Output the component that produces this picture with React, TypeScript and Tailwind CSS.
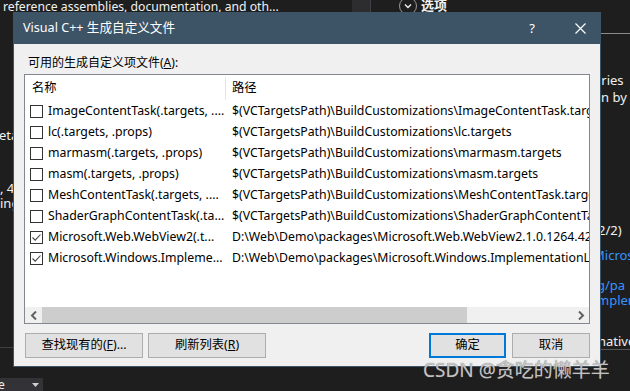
import React from "react";

const FONT = { fontFamily: '"Noto Sans", "Noto Sans CJK SC", sans-serif' };

const rows = [
  { name: "ImageContentTask(.targets, ....", path: "$(VCTargetsPath)\\BuildCustomizations\\ImageContentTask.targets", checked: false },
  { name: "lc(.targets, .props)", path: "$(VCTargetsPath)\\BuildCustomizations\\lc.targets", checked: false },
  { name: "marmasm(.targets, .props)", path: "$(VCTargetsPath)\\BuildCustomizations\\marmasm.targets", checked: false },
  { name: "masm(.targets, .props)", path: "$(VCTargetsPath)\\BuildCustomizations\\masm.targets", checked: false },
  { name: "MeshContentTask(.targets, ....", path: "$(VCTargetsPath)\\BuildCustomizations\\MeshContentTask.targets", checked: false },
  { name: "ShaderGraphContentTask(.ta...", path: "$(VCTargetsPath)\\BuildCustomizations\\ShaderGraphContentTask.targets", checked: false },
  { name: "Microsoft.Web.WebView2(.t...", path: "D:\\Web\\Demo\\packages\\Microsoft.Web.WebView2.1.0.1264.42\\build", checked: true },
  { name: "Microsoft.Windows.Impleme...", path: "D:\\Web\\Demo\\packages\\Microsoft.Windows.ImplementationLibrary", checked: true },
];

function Check({ checked }: { checked: boolean }) {
  return (
    <span className="flex h-[13px] w-[13px] shrink-0 items-center justify-center border border-[#333333] bg-white">
      {checked && (
        <svg width="11" height="11" viewBox="0 0 11 11">
          <path d="M1.5 5.5 L4.2 8.2 L9.5 2.5" fill="none" stroke="#444" strokeWidth="1.1" />
        </svg>
      )}
    </span>
  );
}

function Btn({ children, primary, w }: { children: React.ReactNode; primary?: boolean; w: string }) {
  return (
    <button
      className={`flex h-[25px] items-center justify-center bg-[#e1e1e1] text-[12.3px] text-black ${w} ${
        primary ? "border-2 border-[#0078d7]" : "border border-[#adadad]"
      }`}
    >
      {children}
    </button>
  );
}

export default function App() {
  return (
    <div className="relative h-[391px] w-[630px] overflow-hidden bg-[#1e1e1e] text-[#f1f1f1]" style={FONT}>
      {/* background IDE bits */}
      <div className="absolute left-[3px] top-[-2px] text-[12.2px] leading-[18px]">
        reference assemblies, documentation, and oth...
      </div>
      <div className="absolute left-[352px] top-0 h-[14px] w-[18px] bg-[#2d2d30]" />
      <div className="absolute left-[370px] top-0 h-[14px] w-px bg-[#3f3f46]" />
      <div className="absolute left-[399px] top-[-4px] flex items-center gap-[4px]">
        <span className="flex h-[18px] w-[18px] items-center justify-center rounded-full border border-[#999]">
          <svg width="10" height="10" viewBox="0 0 10 10">
            <path d="M2 3.5 L5 6.5 L8 3.5" fill="none" stroke="#f1f1f1" strokeWidth="1.4" />
          </svg>
        </span>
        <span className="text-[13px] font-bold">选项</span>
      </div>
      <div className="absolute left-[600px] top-[33px] h-px w-[30px] bg-[#8a8a8a]" />
      <div className="absolute left-[594px] top-[71px] text-[13px] leading-[18px]">aries (</div>
      <div className="absolute left-[601px] top-[88px] text-[13px] leading-[18px]">n by</div>
      <div className="absolute left-[598px] top-[221px] text-[13px] leading-[18px]">2/2)</div>
      <div className="absolute left-[593px] top-[246px] text-[13px] leading-[18px] text-[#3794ff]">Micros</div>
      <div className="absolute left-[597px] top-[276px] text-[13px] leading-[18px] text-[#3794ff]">g/pa</div>
      <div className="absolute left-[597px] top-[291px] text-[13px] leading-[18px] text-[#3794ff]">mpler</div>
      <div className="absolute left-[598px] top-[332px] text-[13px] leading-[18px]">native</div>
      <div className="absolute left-[600px] top-[349px] h-px w-[30px] bg-[#555]" />
      <div className="absolute left-[-1px] top-[126px] text-[13px] leading-[18px]">eta</div>
      <div className="absolute left-0 top-[179px] text-[13px] leading-[18px]">, 4</div>
      <div className="absolute left-0 top-[194px] text-[13px] leading-[18px]">ing</div>
      <div className="absolute left-0 top-[347px] h-px w-[14px] bg-[#3f3f46]" />
      <div className="absolute left-0 top-[378px] flex h-[14px] w-[43px] items-center justify-between bg-[#333337] pr-[4px] text-[12px]">
        <span className="-ml-[2px]">e</span>
        <svg width="7" height="4" viewBox="0 0 7 4">
          <path d="M0 0 H7 L3.5 4 Z" fill="#d0d0d0" />
        </svg>
      </div>

      {/* dialog */}
      <div className="absolute left-[13px] top-[12px] flex h-[355px] w-[588px] flex-col border border-[#3d5366] bg-[#f0f0f0]">
        <div className="flex h-[31px] shrink-0 items-center bg-[#3d5366] pl-[9px] pr-[14px] text-[12.6px] text-white">
          <span>Visual C++ 生成自定义文件</span>
          <span className="ml-auto text-[13px]">?</span>
          <svg className="ml-[40px]" width="11" height="11" viewBox="0 0 11 11">
            <path d="M0.5 0.5 L10.5 10.5 M10.5 0.5 L0.5 10.5" stroke="#fff" strokeWidth="1.2" />
          </svg>
        </div>
        <div className="flex flex-1 flex-col px-[10px] pt-[11px]">
          <div className="h-[18px] pl-[4px] text-[12px] leading-[16px] text-black">
            可用的生成自定义项文件(<span className="underline">A</span>):
          </div>
          <div className="mt-[1px] flex h-[250px] flex-col border border-[#828790] bg-white text-[12.3px] text-black">
            <div className="flex h-[26px] shrink-0 items-center">
              <div className="w-[200px] pl-[7px]">名称</div>
              <div className="h-[23px] w-px bg-[#e5e5e5]" />
              <div className="pl-[6px]">路径</div>
            </div>
            {rows.map((r) => (
              <div key={r.name} className="flex h-[21px] shrink-0 items-center whitespace-nowrap">
                <div className="flex w-[201px] items-center gap-[5px] overflow-hidden pl-[5px]">
                  <Check checked={r.checked} />
                  <span className="overflow-hidden">{r.name}</span>
                </div>
                <div className="flex-1 overflow-hidden pl-[6px]">{r.path}</div>
              </div>
            ))}
            <div className="flex-1" />
            <div className="flex h-[16px] shrink-0 bg-[#f0f0f0]">
              <div className="flex w-[17px] items-center justify-center">
                <svg width="8" height="9" viewBox="0 0 8 9">
                  <path d="M6 0.5 L2 4.5 L6 8.5" fill="none" stroke="#606060" strokeWidth="2" />
                </svg>
              </div>
              <div className="w-[425px] bg-[#cdcdcd]" />
              <div className="flex flex-1 items-center justify-end pr-[4px]">
                <svg width="8" height="9" viewBox="0 0 8 9">
                  <path d="M2 0.5 L6 4.5 L2 8.5" fill="none" stroke="#606060" strokeWidth="2" />
                </svg>
              </div>
            </div>
          </div>
          <div className="mt-[9px] flex pl-[1px]">
            <Btn w="w-[118px]">
              查找现有的(<span className="underline">F</span>)...
            </Btn>
            <div className="ml-[5px]">
              <Btn w="w-[118px]">
                刷新列表(<span className="underline">R</span>)
              </Btn>
            </div>
            <div className="ml-auto flex gap-[6px]">
              <Btn primary w="w-[77px]">
                确定
              </Btn>
              <Btn w="w-[78px]">取消</Btn>
            </div>
          </div>
        </div>
      </div>

      {/* watermark */}
      <div className="absolute left-[423px] top-[357px] text-[19px] leading-[26px] text-[#d0d0d0]/90 [text-shadow:0_0_1px_#666]">
        CSDN @贪吃的懒羊羊
      </div>
    </div>
  );
}
